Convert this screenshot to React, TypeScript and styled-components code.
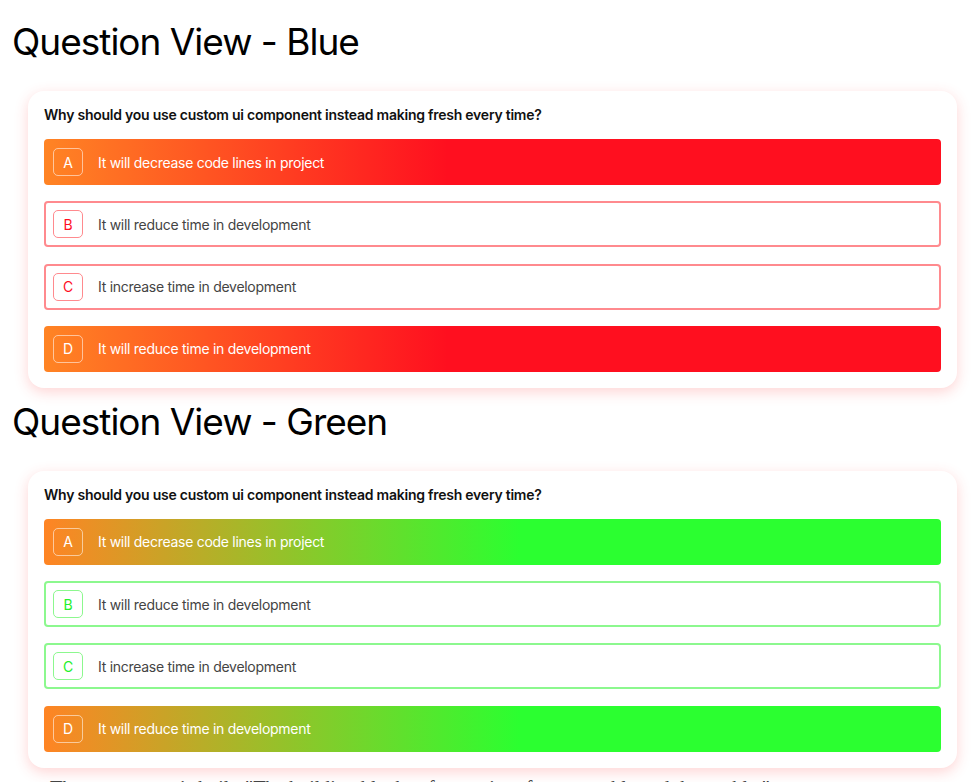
import React from "react";
import styled, { createGlobalStyle, css } from "styled-components";

const Global = createGlobalStyle`
  html, body { background: #ffffff; }
  body {
    margin: 8px;
    font-family: "Liberation Serif", serif;
    overflow: hidden;
  }
`;

type Tone = "red" | "green";

const palette: Record<Tone, { end: string; stop: string; border: string; letter: string }> = {
  red: { end: "#ff0f1f", stop: "45%", border: "#ff8a8e", letter: "#ff0f1f" },
  green: { end: "#2bff30", stop: "53%", border: "#8cf88e", letter: "#24f02a" },
};

const Title = styled.h1`
  margin: 0;
  font-family: Inter, "Noto Sans", sans-serif;
  font-weight: 400;
  font-size: 37px;
  line-height: 68px;
  color: #000;
  padding-left: 4px;
  letter-spacing: -1px;
`;

const Card = styled.section`
  margin: 15px 15px 0 20px;
  background: #fff;
  border-radius: 16px;
  padding: 13px 16px 16px 16px;
  box-shadow: 0 4px 14px rgba(255, 60, 60, 0.22);
  display: flex;
  flex-direction: column;
  gap: 13px;
  font-family: Inter, "Noto Sans", sans-serif;
`;

const Question = styled.h2`
  margin: 0;
  font-size: 14px;
  font-weight: 600;
  line-height: 22px;
  color: #111;
  letter-spacing: -0.24px;
`;

const Options = styled.div`
  display: flex;
  flex-direction: column;
  gap: 16.3px;
`;

const Option = styled.div<{ $tone: Tone; $selected: boolean }>`
  height: 46px;
  box-sizing: border-box;
  border-radius: 4px;
  display: flex;
  align-items: center;
  gap: 15px;
  padding: 0 9px;
  font-size: 14px;
  letter-spacing: -0.28px;
  ${({ $tone, $selected }) =>
    $selected
      ? css`
          background: linear-gradient(90deg, #ff8424 0%, ${palette[$tone].end} ${palette[$tone].stop});
          color: #fff;
        `
      : css`
          background: #fff;
          border: 2px solid ${palette[$tone].border};
          padding: 0 7px;
          color: #444;
        `}
`;

const Badge = styled.span<{ $tone: Tone; $selected: boolean }>`
  width: 30px;
  height: 28px;
  box-sizing: border-box;
  border-radius: 5px;
  display: flex;
  align-items: center;
  justify-content: center;
  font-size: 14px;
  letter-spacing: 0;
  ${({ $tone, $selected }) =>
    $selected
      ? css`
          border: 1px solid rgba(255, 255, 255, 0.55);
          color: #fff;
        `
      : css`
          border: 1px solid ${palette[$tone].border};
          color: ${palette[$tone].letter};
        `}
`;

const Footer = styled.p`
  margin: 8px 0 0 42px;
  font-family: "Liberation Serif", serif;
  font-size: 20px;
  line-height: 24px;
  color: #444;
`;

const options = [
  { key: "A", text: "It will decrease code lines in project", selected: true },
  { key: "B", text: "It will reduce time in development", selected: false },
  { key: "C", text: "It increase time in development", selected: false },
  { key: "D", text: "It will reduce time in development", selected: true },
];

function QuestionView({ tone }: { tone: Tone }) {
  return (
    <Card>
      <Question>Why should you use custom ui component instead making fresh every time?</Question>
      <Options>
        {options.map((o) => (
          <Option key={o.key} $tone={tone} $selected={o.selected}>
            <Badge $tone={tone} $selected={o.selected}>{o.key}</Badge>
            <span>{o.text}</span>
          </Option>
        ))}
      </Options>
    </Card>
  );
}

export default function App() {
  return (
    <>
      <Global />
      <Title>Question View - Blue</Title>
      <QuestionView tone="red" />
      <Title>Question View - Green</Title>
      <QuestionView tone="green" />
      <Footer>
        The component is built. "The building blocks of every interface, reusable and themeable."
      </Footer>
    </>
  );
}
